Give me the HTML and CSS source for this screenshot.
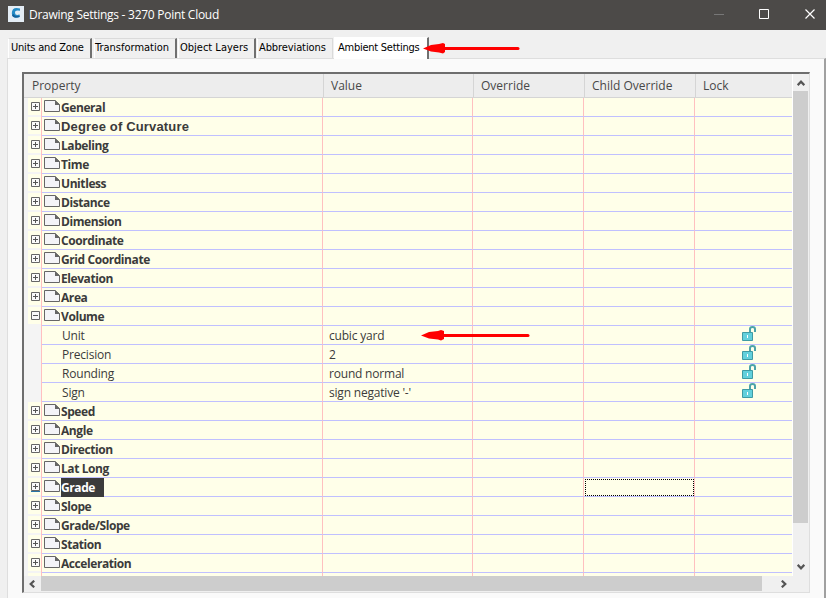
FILE: index.html
```html
<!DOCTYPE html>
<html lang="en">
<head>
<meta charset="utf-8">
<title>Drawing Settings - 3270 Point Cloud</title>
<link rel="stylesheet" href="styles.css">
</head>
<body>
<svg class="defs" width="0" height="0" aria-hidden="true">
  <symbol id="plus" viewBox="0 0 9 9"><path d="M.5 .5h8v8h-8z" fill="#fafafa" stroke="#666"/><path d="M2 4.500h5M4.500 2v5" stroke="#555"/></symbol>
  <symbol id="minus" viewBox="0 0 9 9"><path d="M.5 .5h8v8h-8z" fill="#fafafa" stroke="#666"/><path d="M2 4.500h5" stroke="#555"/></symbol>
  <symbol id="folder" viewBox="0 0 16 12"><path d="M.5 .5h10.500l4.500 4v7H.5z" fill="#f4f4f8" stroke="#666"/><path d="M11 0l5 5h-5z" fill="#666"/></symbol>
  <symbol id="lock" viewBox="0 0 14 15"><path d="M8 6V3q0-2 2.500-2T13 3v3" fill="none" stroke="#4ca3aa" stroke-width="2"/><path d="M.5 6.500h10v8H.5z" fill="#62d0dc" stroke="#3f9ba4"/><path d="M5.500 9v3" stroke="#fff"/></symbol>
  <symbol id="chevron" viewBox="0 0 8 6"><path d="M.7 5.200L4 1.700l3.300 3.500" fill="none" stroke="#555" stroke-width="2.200"/></symbol>
</svg>
<div class="window">
  <header class="titlebar">
    <svg class="logo" width="16" height="16" viewBox="0 0 16 16"><path d="M0 0h16v16H0z" fill="#e4edf5"/><path d="M12 4.800V2.500Q4 .2 3.800 7.300q.3 5.900 7.800 3.700V8.600Q7 10 7 6.800t5-2z" fill="#248bc5"/><path d="M4 9q1.200 4.200 7.600 2V9.500Q7 11 5.500 8z" fill="#12609b"/></svg>
    <h1>Drawing Settings - 3270 Point Cloud</h1>
    <svg class="controls" width="106" height="12" viewBox="0 0 106 12"><path d="M0 6.500h10" stroke="#777"/><path d="M45.500 1.500h9v9h-9z" fill="none" stroke="#fff"/><path d="M91.500 1.500l9 9m0-9l-9 9" stroke="#fff" stroke-width="1.200"/></svg>
  </header>
  <nav class="tabs">
    <span class="tab units">Units and Zone</span>
    <span class="tab transformation">Transformation</span>
    <span class="tab layers">Object Layers</span>
    <span class="tab abbreviations">Abbreviations</span>
    <span class="tab active">Ambient Settings</span>
  </nav>
  <main class="page">
    <div class="frame">
      <section class="grid">
        <div class="head"><span>Property</span><span>Value</span><span>Override</span><span>Child Override</span><span>Lock</span></div>
        <div class="rows" id="rows"></div>
      </section>
      <div class="vbar">
        <div class="arrow"><svg width="8" height="6"><use href="#chevron"/></svg></div>
        <div class="vthumb"></div>
        <div class="arrow down"><svg width="8" height="6"><use href="#chevron"/></svg></div>
      </div>
      <div class="hbar">
        <div class="arrow left"><svg width="8" height="6"><use href="#chevron"/></svg></div>
        <div class="hthumb"></div>
        <div class="arrow right"><svg width="8" height="6"><use href="#chevron"/></svg></div>
      </div>
    </div>
  </main>
  <svg class="pointer first" width="98" height="12" viewBox="0 0 98 12"><path d="M20 6.500h75" stroke="#f00" stroke-width="3" stroke-linecap="round"/><path d="M0 6.500L8 3l8-1 4-1 2 1v8l-2 1.500-4-1-8-1z" fill="#f00"/></svg>
  <svg class="pointer second" width="110" height="12" viewBox="0 0 110 12"><path d="M20 6.500h87" stroke="#f00" stroke-width="3" stroke-linecap="round"/><path d="M0 6.500L8 3l9-1 3-1 3 1v8l-3 1.500-3-1-9-1z" fill="#f00"/></svg>
</div>
<script src="rows.js"></script>
</body>
</html>
```
FILE: styles.css
```css
*, *::before { box-sizing: border-box; }
body { margin: 0; background: #f0f0f0; font-family: "Open Sans", "Noto Sans", sans-serif; font-size: 12px; color: #3b3b3b; overflow: hidden; }
.defs { position: absolute; }
svg { display: block; flex: none; }
.window { position: relative; width: 826px; height: 598px; display: flex; flex-direction: column; }
.titlebar { height: 30px; flex: none; background: #4c4a48; display: flex; align-items: center; padding: 0 6px 2px 8px; }
.titlebar h1 { margin: 1px auto 0 5px; font-size: 12px; font-weight: 400; color: #fff; white-space: nowrap; letter-spacing: -.27px; }
.tabs { height: 28px; flex: none; padding-left: 8px; display: flex; align-items: flex-end; font: 11px/17px "DejaVu Sans Condensed", "DejaVu Sans", sans-serif; font-stretch: condensed; color: #000; }
.tab { height: 20px; padding-left: 2px; white-space: nowrap; border: 1px solid #dadada; border-left-color: #fff; border-right: 2px solid #707070; border-bottom: 0; margin-right: 2px; }
.units { width: 84px; letter-spacing: -.2px; }
.transformation { width: 83px; margin-right: 1px; padding-left: 0; }
.layers { width: 78px; margin-right: 1px; padding-left: 1px; }
.abbreviations { width: 76px; margin-right: 1px; padding-left: 1px; border-right: 1px solid #dadada; letter-spacing: -.1px; }
.active { width: 95px; height: 22px; line-height: 20px; padding-left: 3px; background: #fff; border-top-color: #fff; position: relative; margin-bottom: -1px; letter-spacing: -.25px; }
.page { flex: 1; min-height: 0; margin-left: 7px; padding: 13px 0 0 14px; background: #fafafa; border-top: 1px solid #dedede; border-left: 1px solid #dedede; border-right: 2px solid #a0a0a0; }
.frame { width: 788px; height: 521px; border: 2px solid #6e6e6e; border-right: 1px solid #dedede; border-bottom: 1px solid #dedede; display: grid; grid-template-columns: 768px 17px; grid-template-rows: 502px 16px; background: #f0f0f0; }
.grid { overflow: hidden; background: #ffffe9; }
.head { height: 24px; display: grid; grid-template-columns: 300px 150px 111px 111px 1fr; background: #ededed; border-bottom: 1px solid #d5d5d5; line-height: 23px; color: #484848; }
.head span { border-right: 1px solid #d5d5d5; padding-left: 7px; white-space: nowrap; }
.head span:first-child { padding-left: 8px; }
.head span:last-child { border: 0; }
.rows { height: 478px; overflow: hidden; }
.row { height: 19px; display: grid; grid-template-columns: 18px 281px 150px 111px 111px 1fr; line-height: 19px; }
.gutter { border-right: 1px solid #ffc0c0; padding: 4px 0 0 7px; background: linear-gradient(#ffffe9, #ffffe9) 4px 0 / 13px 17px no-repeat #f4f4f4; }
.child .gutter { background: #f4f4f4; }
.cell { border-right: 1px solid #ffc0c0; border-bottom: 1px solid #c0c0ff; white-space: nowrap; padding-left: 6px; height: 19px; letter-spacing: -.2px; }
.cell:last-child { border-right: 0; padding: 0 0 0 47px; }
.name { display: flex; padding-left: 2px; }
.name svg { margin-top: 2px; }
.name b { margin-left: 1px; height: 19px; letter-spacing: -.42px; }
.child .name { padding-left: 20px; }
.name .arial { font: bold 13px/19px "Liberation Sans", sans-serif; letter-spacing: .16px; }
.selected b { background: #3b3b3b; color: #fff; padding: 0 9px 0 0; }
.selected .gutter svg { box-shadow: 0 1px #2874a8; }
.focus { padding: 1px 0 0 1px; }
.focus::before { content: ""; display: block; width: 109px; height: 17px; border: 1px dotted #000; }
.vbar { border-left: 1px solid #fff; display: flex; flex-direction: column; }
.vbar .arrow { height: 17px; width: 15px; display: flex; align-items: center; justify-content: center; }
.vthumb { width: 15px; height: 432px; background: #cdcdcd; }
.vbar .down { margin-top: auto; margin-bottom: 1px; }
.down svg { transform: rotate(180deg); }
.hbar { grid-column: 1 / -1; display: flex; }
.hbar .arrow { width: 17px; height: 15px; display: flex; align-items: center; justify-content: center; }
.hthumb { width: 721px; height: 15px; background: #cdcdcd; }
.left svg { transform: translateX(-1px) rotate(-90deg); }
.right svg { transform: rotate(90deg); }
.hbar .right { margin-left: 13px; }
.pointer { position: absolute; }
.first { left: 423px; top: 42px; }
.second { left: 421px; top: 329px; }
```
FILE: rows.js
```js
const groups = ["General", "Degree of Curvature", "Labeling", "Time", "Unitless", "Distance", "Dimension", "Coordinate", "Grid Coordinate", "Elevation", "Area", "Volume", "Speed", "Angle", "Direction", "Lat Long", "Grade", "Slope", "Grade/Slope", "Station", "Acceleration"];
const volume = [["Unit", "cubic yard"], ["Precision", "2"], ["Rounding", "round normal"], ["Sign", "sign negative '-'"]];
const icon = (id, w, h) => `<svg width="${w}" height="${h}"><use href="#${id}"/></svg>`;
const cell = (content = "", cls = "") => `<div class="cell ${cls}">${content}</div>`;

const groupRow = name => {
  const selected = name === "Grade";
  const label = `<b class="${name === "Degree of Curvature" ? "arial" : ""}">${name}</b>`;
  return `<div class="row ${selected ? "selected" : ""}"><div class="gutter">${icon(name === "Volume" ? "minus" : "plus", 9, 9)}</div>`
    + cell(icon("folder", 16, 12) + label, "name") + cell() + cell() + cell("", selected ? "focus" : "") + cell() + `</div>`;
};
const childRow = ([name, value]) => `<div class="row child"><div class="gutter"></div>`
  + cell(name, "name") + cell(value) + cell() + cell() + cell(icon("lock", 14, 15)) + `</div>`;

document.getElementById("rows").innerHTML = groups
  .map(name => groupRow(name) + (name === "Volume" ? volume.map(childRow).join("") : ""))
  .join("") + `<div class="row"><div class="gutter"></div>${cell()}${cell()}${cell()}${cell()}${cell()}</div>`;
```
